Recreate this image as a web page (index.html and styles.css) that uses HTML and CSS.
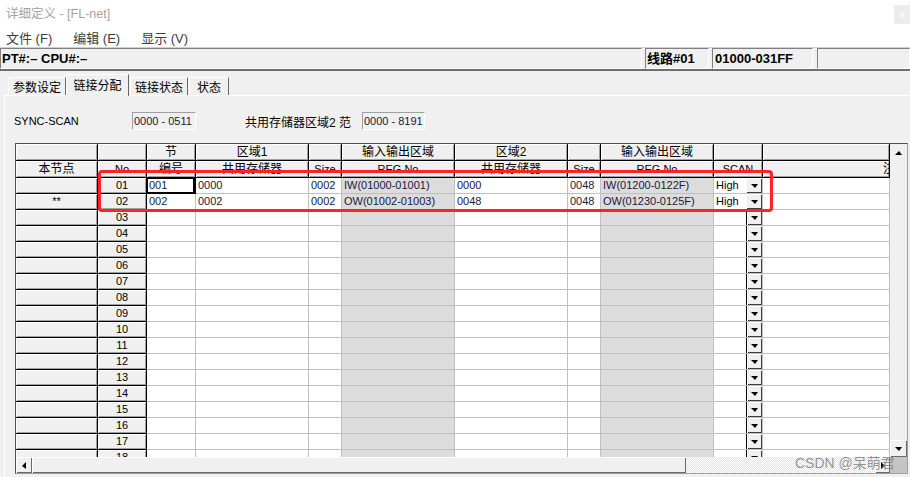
FILE: index.html
```html
<!DOCTYPE html>
<html>
<head>
<meta charset="utf-8">
<title>详细定义 - [FL-net]</title>
<link rel="stylesheet" href="styles.css">
</head>
<body>
<div class="win">
  <div class="titlebar"><span class="title">详细定义 - [FL-net]</span><span class="close">x</span></div>
  <div class="menubar"><span>文件 (F)</span><span>编辑 (E)</span><span>显示 (V)</span></div>
  <div class="statusbar">
    <div class="sp sp1">PT#:– CPU#:–</div>
    <div class="sp sp2">线路#01</div>
    <div class="sp sp3">01000-031FF</div>
    <div class="sp sp4"></div>
  </div>
  <div class="tabs">
    <div class="tab t1">参数设定</div>
    <div class="tab t2 active">链接分配</div>
    <div class="tab t3">链接状态</div>
    <div class="tab t4">状态</div>
  </div>
  <div class="page">
    <div class="sync">
      <span class="lbl1">SYNC-SCAN</span>
      <span class="box box1">0000 - 0511</span>
      <span class="lbl2">共用存储器区域2 范</span>
      <span class="box box2">0000 - 8191</span>
    </div>
    <div class="frame">
      <div class="frame-main">
        <div class="grid">
          <div class="c h"></div><div class="c h"></div><div class="c h">节</div><div class="c h">区域1</div><div class="c h"></div><div class="c h">输入输出区域</div><div class="c h">区域2</div><div class="c h"></div><div class="c h">输入输出区域</div><div class="c h"></div><div class="c h"></div>
          <div class="c h">本节点</div><div class="c h lt">No</div><div class="c h">编号</div><div class="c h">共用存储器</div><div class="c h lt">Size</div><div class="c h lt">REG No</div><div class="c h">共用存储器</div><div class="c h lt">Size</div><div class="c h lt">REG No</div><div class="c h lt">SCAN</div><div class="c h last">注释</div>

          <div class="c fx"></div><div class="c fx">01</div><div class="c sel">001</div><div class="c">0000</div><div class="c">0002</div><div class="c reg">IW(01000-01001)</div><div class="c">0000</div><div class="c">0048</div><div class="c reg">IW(01200-0122F)</div><div class="c scan">High<span class="dd"></span></div><div class="c"></div>
          <div class="c fx">**</div><div class="c fx">02</div><div class="c">002</div><div class="c">0002</div><div class="c">0002</div><div class="c reg">OW(01002-01003)</div><div class="c">0048</div><div class="c">0048</div><div class="c reg">OW(01230-0125F)</div><div class="c scan">High<span class="dd"></span></div><div class="c"></div>
          <div class="c fx"></div><div class="c fx">03</div><div class="c"></div><div class="c"></div><div class="c"></div><div class="c reg"></div><div class="c"></div><div class="c"></div><div class="c reg"></div><div class="c scan"><span class="dd b"></span></div><div class="c"></div>
          <div class="c fx"></div><div class="c fx">04</div><div class="c"></div><div class="c"></div><div class="c"></div><div class="c reg"></div><div class="c"></div><div class="c"></div><div class="c reg"></div><div class="c scan"><span class="dd b"></span></div><div class="c"></div>
          <div class="c fx"></div><div class="c fx">05</div><div class="c"></div><div class="c"></div><div class="c"></div><div class="c reg"></div><div class="c"></div><div class="c"></div><div class="c reg"></div><div class="c scan"><span class="dd b"></span></div><div class="c"></div>
          <div class="c fx"></div><div class="c fx">06</div><div class="c"></div><div class="c"></div><div class="c"></div><div class="c reg"></div><div class="c"></div><div class="c"></div><div class="c reg"></div><div class="c scan"><span class="dd b"></span></div><div class="c"></div>
          <div class="c fx"></div><div class="c fx">07</div><div class="c"></div><div class="c"></div><div class="c"></div><div class="c reg"></div><div class="c"></div><div class="c"></div><div class="c reg"></div><div class="c scan"><span class="dd b"></span></div><div class="c"></div>
          <div class="c fx"></div><div class="c fx">08</div><div class="c"></div><div class="c"></div><div class="c"></div><div class="c reg"></div><div class="c"></div><div class="c"></div><div class="c reg"></div><div class="c scan"><span class="dd b"></span></div><div class="c"></div>
          <div class="c fx"></div><div class="c fx">09</div><div class="c"></div><div class="c"></div><div class="c"></div><div class="c reg"></div><div class="c"></div><div class="c"></div><div class="c reg"></div><div class="c scan"><span class="dd b"></span></div><div class="c"></div>
          <div class="c fx"></div><div class="c fx">10</div><div class="c"></div><div class="c"></div><div class="c"></div><div class="c reg"></div><div class="c"></div><div class="c"></div><div class="c reg"></div><div class="c scan"><span class="dd b"></span></div><div class="c"></div>
          <div class="c fx"></div><div class="c fx">11</div><div class="c"></div><div class="c"></div><div class="c"></div><div class="c reg"></div><div class="c"></div><div class="c"></div><div class="c reg"></div><div class="c scan"><span class="dd b"></span></div><div class="c"></div>
          <div class="c fx"></div><div class="c fx">12</div><div class="c"></div><div class="c"></div><div class="c"></div><div class="c reg"></div><div class="c"></div><div class="c"></div><div class="c reg"></div><div class="c scan"><span class="dd b"></span></div><div class="c"></div>
          <div class="c fx"></div><div class="c fx">13</div><div class="c"></div><div class="c"></div><div class="c"></div><div class="c reg"></div><div class="c"></div><div class="c"></div><div class="c reg"></div><div class="c scan"><span class="dd b"></span></div><div class="c"></div>
          <div class="c fx"></div><div class="c fx">14</div><div class="c"></div><div class="c"></div><div class="c"></div><div class="c reg"></div><div class="c"></div><div class="c"></div><div class="c reg"></div><div class="c scan"><span class="dd b"></span></div><div class="c"></div>
          <div class="c fx"></div><div class="c fx">15</div><div class="c"></div><div class="c"></div><div class="c"></div><div class="c reg"></div><div class="c"></div><div class="c"></div><div class="c reg"></div><div class="c scan"><span class="dd b"></span></div><div class="c"></div>
          <div class="c fx"></div><div class="c fx">16</div><div class="c"></div><div class="c"></div><div class="c"></div><div class="c reg"></div><div class="c"></div><div class="c"></div><div class="c reg"></div><div class="c scan"><span class="dd b"></span></div><div class="c"></div>
          <div class="c fx"></div><div class="c fx">17</div><div class="c"></div><div class="c"></div><div class="c"></div><div class="c reg"></div><div class="c"></div><div class="c"></div><div class="c reg"></div><div class="c scan"><span class="dd b"></span></div><div class="c"></div>
          <div class="c fx"></div><div class="c fx">18</div><div class="c"></div><div class="c"></div><div class="c"></div><div class="c reg"></div><div class="c"></div><div class="c"></div><div class="c reg"></div><div class="c scan"><span class="dd b"></span></div><div class="c"></div>
        </div>
        <div class="vscroll">
          <div class="sbtn up"><span class="arr-up"></span></div>
          <div class="sbtn down raised"><span class="arr-down"></span></div>
        </div>
      </div>
      <div class="hscroll">
        <div class="hbtn raised"><span class="arr-left"></span></div>
        <div class="thumb raised"></div>
        <div class="track"></div>
        <div class="hbtn rbtn raised"><span class="arr-right"></span></div>
        <div class="corner"></div>
      </div>
      <div class="redbox"></div>
    </div>
  </div>
  <div class="watermark">CSDN @呆萌君</div>
</div>
</body>
</html>
```
FILE: styles.css
```css
* { box-sizing: border-box; }
body {
  margin: 0;
  background: #f0f0f0;
  font-family: "Liberation Sans", "Noto Sans CJK SC", sans-serif;
}
.win {
  position: relative;
  width: 910px;
  height: 477px;
  overflow: hidden;
  background: #f0f0f0;
}
.titlebar {
  height: 24px;
  background: #fff;
  display: flex;
  align-items: center;
  padding-left: 6px;
  font-size: 12.5px;
  color: #a3a3a3;
}
.close {
  margin-left: auto;
  align-self: flex-start;
  margin-top: 5px;
  width: 16px;
  height: 19px;
  background: #ececec;
  color: #fdfdfd;
  font-size: 11px;
  line-height: 19px;
  text-align: center;
}
.menubar {
  height: 23px;
  background: #fff;
  display: flex;
  align-items: center;
  gap: 21px;
  padding: 3px 0 0 6px;
  font-size: 13px;
  color: #3c3c3c;
}
.statusbar {
  display: flex;
  height: 24px;
  border-top: 1px solid #cfcfcf;
  border-bottom: 2px solid #6e6e6e;
  font-weight: bold;
  font-size: 13px;
  color: #000;
}
.sp {
  height: 21px;
  border: 1px solid;
  border-color: #808080 #fff #fff #808080;
  line-height: 19px;
  padding-left: 1px;
  white-space: nowrap;
  overflow: hidden;
}
.sp1 { width: 642px; }
.sp2 { width: 64px; margin-left: 3px; }
.sp3 { width: 101px; margin-left: 3px; padding-left: 2px; }
.sp4 { flex: 1; margin-left: 4px; }

.tabs {
  height: 24px;
  display: flex;
  align-items: flex-end;
  padding-left: 8px;
  font-family: "Noto Sans CJK SC", sans-serif;
  font-size: 12px;
  color: #000;
}
.tab {
  height: 18px;
  border-top: 1px solid #fff;
  border-left: 1px solid #fff;
  border-right: 1px solid #696969;
  text-align: center;
  line-height: 17px;
  white-space: nowrap;
}
.t1 { width: 58px; }
.t2 { width: 63px; }
.t3 { width: 58px; margin-left: 1px; }
.t4 { width: 40px; margin-left: 1px; }
.tab.active {
  height: 22px;
  margin-bottom: -1px;
  position: relative;
  z-index: 1;
  background: #f0f0f0;
  line-height: 20px;
}
.page {
  border-top: 1px solid #fff;
  border-left: 1px solid #fff;
  margin-left: 4px;
  height: 382px;
  padding: 16px 0 0 10px;
}
.sync {
  display: flex;
  align-items: center;
  height: 18px;
  margin-bottom: 13px;
  font-size: 11px;
  color: #000;
}
.lbl1 { width: 118px; margin-left: -1px; }
.lbl2 {
  width: 117px;
  margin-left: 49px;
  font-size: 12px;
}
.box {
  height: 18px;
  border: 1px solid;
  border-color: #a0a0a0 #fff #fff #a0a0a0;
  padding-left: 1px;
  line-height: 16px;
  white-space: nowrap;
  color: #18183a;
}
.box1 { width: 64px; }
.box2 { width: 63px; }

.frame {
  position: relative;
  width: 893px;
  border: 1px solid;
  border-color: #505050 #a0a0a0 #a0a0a0 #505050;
}
.frame-main {
  display: flex;
  height: 313px;
}
.grid {
  width: 874px;
  height: 313px;
  overflow: hidden;
  display: grid;
  grid-template-columns: 82px 49px 49px 113px 33px 113px 113px 33px 113px 49px 127px;
  grid-template-rows: 17px 17px;
  grid-auto-rows: 16px;
  align-content: start;
  background: #fff;
}
.c {
  border-right: 1px solid #c0c0c0;
  border-bottom: 1px solid #c0c0c0;
  background: #fff;
  font-size: 11px;
  line-height: 15px;
  padding-left: 2px;
  white-space: nowrap;
  overflow: hidden;
  color: #18183c;
}
.h, .fx {
  background: #f0f0f0;
  border-right-color: #000;
  border-bottom-color: #000;
  box-shadow: inset 1px 1px 0 #fff, inset -1px -1px 0 #a0a0a0;
  color: #000;
  text-align: center;
  padding-left: 0;
}
.h {
  font-size: 12px;
  line-height: 16px;
}
.h.lt { font-size: 11px; }
.h.last {
  text-align: left;
  padding-left: 120px;
}
.reg { background: #dcdcdc; }
.sel {
  box-shadow: inset 0 0 0 1px #000, inset -2px 0 0 #000;
  border-right-color: #000;
  border-bottom-color: #000;
}
.scan {
  display: flex;
  color: #000;
}
.dd {
  margin-left: auto;
  width: 16px;
  height: 15px;
  background: #f0f0f0;
  box-shadow: inset 1px 1px 0 #fff, inset -1px -1px 0 #404040;
  display: flex;
  align-items: center;
  justify-content: center;
}
.dd.b { border-left: 1px solid #000; }
.dd::after {
  content: "";
  border-left: 4px solid transparent;
  border-right: 3px solid transparent;
  border-top: 4px solid #000;
  margin-top: 1px;
}
.vscroll {
  width: 17px;
  height: 313px;
  display: flex;
  flex-direction: column;
  background: #f0f0f0;
}
.sbtn {
  width: 17px;
  height: 17px;
  background: #f0f0f0;
  display: flex;
  align-items: center;
  justify-content: center;
}
.sbtn.down { margin-top: auto; }
.raised {
  background: #f0f0f0;
  box-shadow: inset 1px 1px 0 #fff, inset -1px -1px 0 #696969;
}
.arr-up {
  border-left: 4px solid transparent;
  border-right: 3px solid transparent;
  border-bottom: 4px solid #000;
}
.arr-down {
  border-left: 4px solid transparent;
  border-right: 3px solid transparent;
  border-top: 4px solid #000;
}
.arr-left {
  border-top: 4px solid transparent;
  border-bottom: 3px solid transparent;
  border-right: 4px solid #000;
}
.arr-right {
  border-top: 4px solid transparent;
  border-bottom: 3px solid transparent;
  border-left: 4px solid #000;
}
.hscroll {
  display: flex;
  height: 16px;
}
.hbtn {
  width: 16px;
  height: 16px;
  display: flex;
  align-items: center;
  justify-content: center;
}
.rbtn { width: 15px; }
.thumb { width: 654px; height: 16px; }
.track {
  flex: 1;
  height: 16px;
  background: repeating-conic-gradient(#ffffff 0% 25%, #e4e4e4 0% 50%) 0 0 / 2px 2px;
}
.corner {
  width: 17px;
  height: 16px;
  background: #c4c4c4;
}
.redbox {
  position: absolute;
  left: 82px;
  top: 26px;
  width: 675px;
  height: 42px;
  border: 3px solid #ff2424;
  border-radius: 4px;
}
.watermark {
  position: absolute;
  left: 795px;
  top: 452px;
  font-size: 14px;
  color: rgba(130, 130, 130, 0.85);
  white-space: nowrap;
}
```
